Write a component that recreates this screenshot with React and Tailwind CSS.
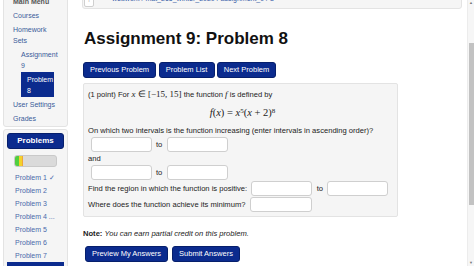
import React from "react";

const linkColor = "text-[#3a5b9a]";

const SideItem = ({ children, indent = false, active = false }) => (
  <div className={indent ? "pl-[17px]" : "pl-[9px]"}>
    <div
      className={
        active
          ? "w-[33px] bg-[#0b2b8e] text-white text-[7px] leading-[11px] py-[1.5px] pl-[6px] overflow-hidden whitespace-nowrap"
          : `${linkColor} text-[7px] leading-[11px] py-[1.5px]`
      }
    >
      {children}
    </div>
  </div>
);

const Btn = ({ children, w }) => (
  <button
    className={`${w} h-[16px] bg-[#0b2b8e] border border-[#061f6c] rounded-[3px] text-white text-[7.5px] leading-[14px] text-center`}
  >
    {children}
  </button>
);

const Field = ({ w = "w-[61px]" }) => (
  <div className={`${w} h-[15px] bg-white border border-[#cfcfcf] rounded-[3px]`} />
);

const problems = ["Problem 1 ✓", "Problem 2", "Problem 3", "Problem 4 ...", "Problem 5", "Problem 6", "Problem 7"];

export default function App() {
  return (
    <div
      className="w-[474px] h-[266px] overflow-hidden bg-white flex text-[#222]"
      style={{ fontFamily: '"Liberation Sans", Arial, sans-serif' }}
    >
      {/* sidebar */}
      <div className="ml-[3px] w-[65px] shrink-0 flex flex-col">
        <div className="-mt-[11px] pt-[4px] pb-[1px] bg-[#f5f5f5] border border-[#e3e3e3] rounded-[3px]">
          <div className="pl-[9px] text-[7px] leading-[11px] py-[1.5px] font-bold text-[#555]">Main Menu</div>
          <SideItem>Courses</SideItem>
          <SideItem>
            Homework
            <br />
            Sets
          </SideItem>
          <SideItem indent>
            Assignment
            <br />9
          </SideItem>
          <SideItem indent active>
            Problem
            <br />8
          </SideItem>
          <SideItem>User Settings</SideItem>
          <SideItem>Grades</SideItem>
        </div>

        <div className="mt-[2px] flex-1 bg-[#f5f5f5] border border-[#e3e3e3] rounded-[3px] pt-[3px] flex flex-col items-center">
          <div className="w-[57px] h-[16px] bg-[#0b2b8e] border border-[#061f6c] rounded-[3px] text-white text-[8px] font-bold leading-[14px] text-center">
            Problems
          </div>
          <div className="mt-[6px] w-[43px] h-[12px] bg-[#dadada] border border-[#c9c9c9] rounded-[3px] flex overflow-hidden">
            <div className="w-[4px] bg-[#52cf3f]" />
            <div className="w-[4px] bg-[#f3d22b] border-r border-[#f0a53a]" />
          </div>
          <div className="mt-[4px] w-[57px]">
            {problems.map((p) => (
              <div key={p} className="pl-[8px] text-[7px] leading-[13px] text-[#4a6aaa] whitespace-nowrap">
                {p}
              </div>
            ))}
            <div className="pl-[8px] text-[7px] leading-[13px] bg-[#0b2b8e] text-white">Problem 8</div>
          </div>
        </div>
      </div>

      {/* main */}
      <div className="ml-[14px] w-[380px] shrink-0 flex flex-col">
        <div className="-mt-[11px] h-[20px] bg-[#f5f5f5] border border-[#e3e3e3] rounded-[3px] flex items-end pl-[1px] pb-[1px]">
          <div className="w-[10px] h-[14px] bg-white border border-[#cfcfcf] rounded-[2px] text-[6px] leading-[12px] text-center text-[#555]">
            ↑
          </div>
          <div className="ml-[18px] mb-[5px] text-[7px] leading-[7px] text-[#3a5fa8] whitespace-nowrap">
            webwork / mat_265_winter_2020 / assignment_9 / 8
          </div>
        </div>

        <h1 className="mt-[20px] ml-[2px] text-[17px] leading-[20px] font-bold text-[#111]">
          Assignment 9: Problem 8
        </h1>

        <div className="mt-[13px] ml-[1px] flex gap-[2.5px]">
          <Btn w="w-[73px]">Previous Problem</Btn>
          <Btn w="w-[56px]">Problem List</Btn>
          <Btn w="w-[59px]">Next Problem</Btn>
        </div>

        <div className="mt-[5px] ml-[1px] w-[315px] bg-[#f5f5f5] border border-[#e3e3e3] rounded-[2px] pt-[5px] pb-[4px] pl-[4px] text-[7.6px] text-[#222]">
          <div className="leading-[11px] whitespace-nowrap">
            (1 point) For{" "}
            <span className="text-[9px]" style={{ fontFamily: '"Liberation Serif", serif' }}>
              <i>x</i> ∈ [−15, 15]
            </span>{" "}
            the function{" "}
            <i className="text-[9px]" style={{ fontFamily: '"Liberation Serif", serif' }}>
              f
            </i>{" "}
            is defined by
          </div>
          <div
            className="mt-[5px] h-[16px] text-center text-[10.5px] leading-[16px]"
            style={{ fontFamily: '"Liberation Serif", serif' }}
          >
            <i>f</i>(<i>x</i>) = <i>x</i>
            <sup className="text-[7px]">5</sup>(<i>x</i> + 2)
            <sup className="text-[7px]">8</sup>
          </div>
          <div className="mt-[4px] leading-[11px] whitespace-nowrap">
            On which two intervals is the function increasing (enter intervals in ascending order)?
          </div>
          <div className="mt-[1px] flex items-center pl-[3px]">
            <Field />
            <span className="ml-[4px] mr-[5px]">to</span>
            <Field />
          </div>
          <div className="mt-[1px] leading-[11px]">and</div>
          <div className="mt-[1px] flex items-center pl-[3px]">
            <Field />
            <span className="ml-[4px] mr-[5px]">to</span>
            <Field />
          </div>
          <div className="mt-[1px] flex items-center">
            <span className="whitespace-nowrap">Find the region in which the function is positive:</span>
            <div className="ml-auto flex items-center mr-[9px]">
              <Field />
              <span className="ml-[5px] mr-[4px]">to</span>
              <Field />
            </div>
          </div>
          <div className="mt-[1px] flex items-center">
            <span className="whitespace-nowrap">Where does the function achieve its minimum?</span>
            <div className="ml-[5px]">
              <Field w="w-[62px]" />
            </div>
          </div>
        </div>

        <div className="mt-[11px] ml-[1px] text-[7.6px] leading-[11px] whitespace-nowrap">
          <b>Note:</b> <i>You can earn partial credit on this problem.</i>
        </div>

        <div className="mt-[7px] ml-[3px] flex gap-[4px]">
          <Btn w="w-[83px]">Preview My Answers</Btn>
          <Btn w="w-[68px]">Submit Answers</Btn>
        </div>
      </div>

      {/* scrollbar */}
      <div className="ml-auto w-[7px] h-full bg-[#f6f6f6] border-l border-[#ececec] flex flex-col items-center">
        <div className="h-[6px] text-[4px] leading-[6px] text-[#777]">▲</div>
        <div className="mt-[37px] w-[5px] h-[162px] bg-[#c2c2c2]" />
        <div className="mt-auto h-[6px] text-[4px] leading-[6px] text-[#777]">▼</div>
      </div>
    </div>
  );
}
